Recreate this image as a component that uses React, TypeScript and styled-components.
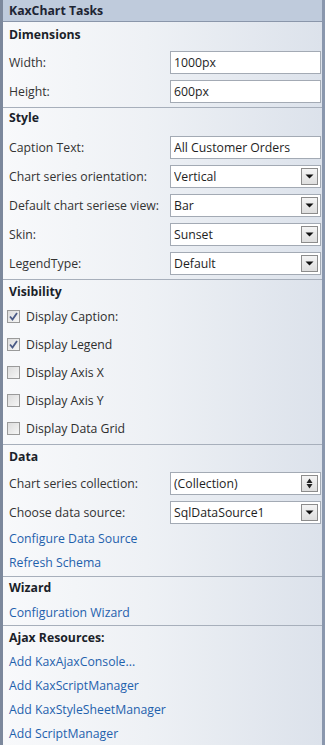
import React from "react";
import styled, { createGlobalStyle } from "styled-components";

const Global = createGlobalStyle`
  html, body { margin: 0; padding: 0; background: #ffffff; overflow: hidden; }
  * { box-sizing: border-box; }
`;

const FONT = `"Open Sans", "Noto Sans", "Liberation Sans", sans-serif`;

const Panel = styled.div`
  width: 325px;
  height: 745px;
  overflow: hidden;
  border-left: 3px solid #7c889c;
  border-right: 3px solid #8a97ad;
  background: linear-gradient(to right, #f8f9fb 0%, #eef1f5 45%, #dce2eb 100%);
  font-family: ${FONT};
  font-size: 12.25px;
  color: #2a2a2a;
`;

const TitleBar = styled.div`
  height: 22px;
  padding-left: 6px;
  line-height: 22px;
  font-weight: 700;
  color: #1d2433;
  background: #bfcbdc;
  border-bottom: 1px solid #8a96aa;
`;

const Section = styled.div<{ $first?: boolean; $padTop?: number; $padBottom?: number }>`
  border-top: ${(p) => (p.$first ? "none" : "1px solid #a7afbb")};
  padding-top: ${(p) => p.$padTop ?? 0}px;
  padding-bottom: ${(p) => p.$padBottom ?? 2}px;
`;

const SectionTitle = styled.div<{ $h?: number; $top?: number }>`
  height: ${(p) => p.$h ?? 24}px;
  padding: ${(p) => p.$top ?? 1}px 0 0 6px;
  line-height: 20px;
  font-weight: 700;
  color: #1b1f2a;
`;

const FieldRow = styled.div`
  display: grid;
  grid-template-columns: 1fr 151px;
  align-items: center;
  height: 29px;
  padding: 0 1px 0 6px;
`;

const Label = styled.span`
  color: #333333;
  white-space: nowrap;
`;

const Box = styled.div`
  height: 23px;
  display: flex;
  align-items: center;
  background: #ffffff;
  border: 1px solid #a3aab4;
  padding: 0 2px 0 3px;
  color: #1e1e1e;
`;

const BoxText = styled.span`
  flex: 1;
  white-space: nowrap;
  overflow: hidden;
`;

const DropButton = styled.span`
  width: 17px;
  height: 17px;
  display: flex;
  align-items: center;
  justify-content: center;
  border: 1px solid #8c8c8c;
  background: linear-gradient(to bottom, #f4f4f4, #dedede);
`;

const CheckRow = styled.div`
  display: flex;
  align-items: center;
  gap: 6px;
  height: 28px;
  padding-left: 4px;
  color: #2e2e2e;
`;

const CheckBox = styled.span`
  width: 13px;
  height: 13px;
  display: flex;
  align-items: center;
  justify-content: center;
  border: 1px solid #9a9a9a;
  background: linear-gradient(135deg, #dcdcdc, #f6f6f6);
`;

const LinkRow = styled.div`
  height: 24px;
  line-height: 24px;
  padding-left: 6px;
  color: #1f61ad;
`;

const Arrow = () => (
  <svg width="9" height="5" viewBox="0 0 9 5">
    <polygon points="0.5,0.5 8.5,0.5 4.5,4.5" fill="#111" />
  </svg>
);

const UpDown = () => (
  <svg width="7" height="11" viewBox="0 0 7 11">
    <polygon points="3.5,0.5 6.5,5 0.5,5" fill="#222" />
    <polygon points="0.5,6 6.5,6 3.5,10.5" fill="#222" />
  </svg>
);

const Check = () => (
  <svg width="9" height="9" viewBox="0 0 9 9">
    <path d="M1 4.5 L3.5 7.5 L8 1" stroke="#4a5a86" strokeWidth="1.8" fill="none" />
  </svg>
);

const TextField = ({ label, value }: { label: string; value: string }) => (
  <FieldRow>
    <Label>{label}</Label>
    <Box>
      <BoxText>{value}</BoxText>
    </Box>
  </FieldRow>
);

const SelectField = ({ label, value, collection }: { label: string; value: string; collection?: boolean }) => (
  <FieldRow>
    <Label>{label}</Label>
    <Box>
      <BoxText>{value}</BoxText>
      <DropButton>{collection ? <UpDown /> : <Arrow />}</DropButton>
    </Box>
  </FieldRow>
);

const CheckItem = ({ label, checked }: { label: string; checked?: boolean }) => (
  <CheckRow>
    <CheckBox>{checked ? <Check /> : null}</CheckBox>
    <span>{label}</span>
  </CheckRow>
);

export default function App() {
  return (
    <>
      <Global />
      <Panel>
        <TitleBar>KaxChart Tasks</TitleBar>
        <Section $first $padTop={2} $padBottom={1}>
          <SectionTitle>Dimensions</SectionTitle>
          <TextField label="Width:" value="1000px" />
          <TextField label="Height:" value="600px" />
        </Section>
        <Section $padBottom={1}>
          <SectionTitle $h={25} $top={0}>Style</SectionTitle>
          <TextField label="Caption Text:" value="All Customer Orders" />
          <SelectField label="Chart series orientation:" value="Vertical" />
          <SelectField label="Default chart seriese view:" value="Bar" />
          <SelectField label="Skin:" value="Sunset" />
          <SelectField label="LegendType:" value="Default" />
        </Section>
        <Section>
          <SectionTitle $h={22} $top={2}>Visibility</SectionTitle>
          <CheckItem label="Display Caption:" checked />
          <CheckItem label="Display Legend" checked />
          <CheckItem label="Display Axis X" />
          <CheckItem label="Display Axis Y" />
          <CheckItem label="Display Data Grid" />
        </Section>
        <Section $padBottom={1}>
          <SectionTitle $top={2}>Data</SectionTitle>
          <SelectField label="Chart series collection:" value="(Collection)" collection />
          <SelectField label="Choose data source:" value="SqlDataSource1" />
          <LinkRow>Configure Data Source</LinkRow>
          <LinkRow>Refresh Schema</LinkRow>
        </Section>
        <Section $padBottom={0}>
          <SectionTitle>Wizard</SectionTitle>
          <LinkRow>Configuration Wizard</LinkRow>
        </Section>
        <Section $padBottom={0}>
          <SectionTitle $top={2}>Ajax Resources:</SectionTitle>
          <LinkRow>Add KaxAjaxConsole...</LinkRow>
          <LinkRow>Add KaxScriptManager</LinkRow>
          <LinkRow>Add KaxStyleSheetManager</LinkRow>
          <LinkRow>Add ScriptManager</LinkRow>
        </Section>
      </Panel>
    </>
  );
}
